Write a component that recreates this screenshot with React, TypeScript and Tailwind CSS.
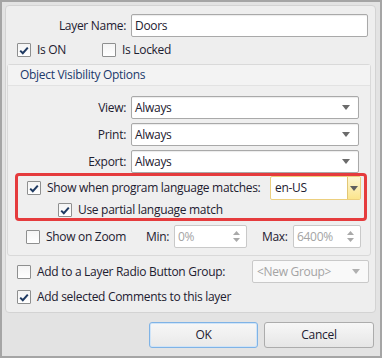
import React from 'react';

const Check = ({ checked }: { checked?: boolean }) => (
  <span className="flex h-[14px] w-[14px] shrink-0 items-center justify-center rounded-[1px] border border-[#8e8f8f] bg-gradient-to-b from-[#f4f4f4] to-white">
    {checked && (
      <svg width="10" height="9" viewBox="0 0 10 9">
        <path d="M1.2 4.6 L3.8 7.2 L8.8 1.6" fill="none" stroke="#1f3a62" strokeWidth="2" />
      </svg>
    )}
  </span>
);

const Arrow = ({ color = '#6b6b6b' }: { color?: string }) => (
  <svg width="8" height="5" viewBox="0 0 8 5">
    <path d="M0 0 H8 L4 5 Z" fill={color} />
  </svg>
);

const Select = ({ value, w }: { value: string; w: string }) => (
  <div className={`flex h-[23px] ${w} items-center rounded-[2px] border border-[#a9a9a9] bg-white pl-[3px] pr-[8px] shadow-[inset_0_1px_1px_rgba(0,0,0,0.08)]`}>
    <span className="flex-1">{value}</span>
    <Arrow />
  </div>
);

const Spin = ({ value, w }: { value: string; w: string }) => (
  <div className={`flex h-[23px] ${w} items-center rounded-[2px] border border-[#c9c9c9] bg-white pl-[3px] pr-[6px]`}>
    <span className="flex-1 text-[#a4a4a4]">{value}</span>
    <div className="flex flex-col gap-[3px]">
      <svg width="7" height="4" viewBox="0 0 7 4"><path d="M0 4 L3.5 0 L7 4 Z" fill="#a9a9a9" /></svg>
      <svg width="7" height="4" viewBox="0 0 7 4"><path d="M0 0 H7 L3.5 4 Z" fill="#a9a9a9" /></svg>
    </div>
  </div>
);

export default function App() {
  return (
    <div
      className="h-[358px] w-[382px] overflow-hidden whitespace-nowrap border-2 border-[#a5a5a5] bg-[#e3e3e3] text-[12px] tracking-[-0.3px] text-[#1d2030]"
      style={{ fontFamily: '"Segoe UI", "Open Sans", sans-serif' }}
    >
      <div className="ml-[3px] mt-[3px] flex h-[308px] w-[371px] flex-col rounded-[4px] border border-[#d3d3d3] bg-[#eeeeee]">
        <div className="mt-[8px] flex items-center">
          <span className="w-[120px] text-right">Layer Name:</span>
          <input
            className="ml-[5px] h-[23px] w-[237px] rounded-[2px] border border-[#a9a9a9] bg-white pl-[3px] outline-none shadow-[inset_0_1px_1px_rgba(0,0,0,0.08)]"
            defaultValue="Doors"
          />
        </div>
        <div className="mt-[6px] flex h-[14px] items-center pl-[11px]">
          <Check checked />
          <span className="ml-[6px] w-[65px]">Is ON</span>
          <Check />
          <span className="ml-[6px]">Is Locked</span>
        </div>

        <div className="ml-[1px] mt-[7px] flex h-[192px] w-[364px] flex-col rounded-[3px] border border-[#d9d9d9] bg-[#efefef]">
          <div className="flex h-[21px] items-center border-b border-[#e2e2e2] bg-[#f3f3f3] pl-[12px] text-[#20396b]">
            Object Visibility Options
          </div>
          <div className="mt-[10px] flex flex-col gap-[4px]">
            {['View:', 'Print:', 'Export:'].map((l) => (
              <div key={l} className="flex items-center">
                <span className="w-[118px] text-right">{l}</span>
                <div className="ml-[5px]">
                  <Select value="Always" w="w-[228px]" />
                </div>
              </div>
            ))}
          </div>

          <div className="ml-[7px] flex h-[48px] w-[352px] flex-col rounded-[4px] border-[3px] border-[#e53b3d]">
            <div className="flex h-[24px] items-center pl-[9px] pr-[3px]">
              <Check checked />
              <span className="ml-[6px]">Show when program language matches:</span>
              <div className="ml-auto flex h-[24px] w-[91px] items-center rounded-[2px] border border-[#eccf7e] bg-white pl-[4px]">
                <span className="flex-1">en-US</span>
                <div className="flex h-full w-[13px] items-center justify-center border-l border-[#e2c775] bg-gradient-to-b from-[#fdf6d2] to-[#fbe58c]">
                  <Arrow color="#5f5f5f" />
                </div>
              </div>
            </div>
            <div className="mt-[3px] flex h-[14px] items-center pl-[40px]">
              <Check checked />
              <span className="ml-[6px]">Use partial language match</span>
            </div>
          </div>

          <div className="mt-[4px] flex items-center pl-[18px]">
            <Check />
            <span className="ml-[6px] w-[100px]">Show on Zoom</span>
            <span className="w-[28px]">Min:</span>
            <Spin value="0%" w="w-[73px]" />
            <span className="ml-[15px] w-[31px]">Max:</span>
            <Spin value="6400%" w="w-[68px]" />
          </div>
        </div>

        <div className="mt-[4px] flex items-center pl-[11px]">
          <Check />
          <span className="ml-[6px] w-[215px]">Add to a Layer Radio Button Group:</span>
          <div className="flex h-[23px] w-[117px] items-center rounded-[2px] border border-[#c9c9c9] bg-[#f9f9f9] pl-[4px] pr-[8px]">
            <span className="flex-1 text-[#a4a4a4]">&lt;New Group&gt;</span>
            <Arrow color="#b0b0b0" />
          </div>
        </div>
        <div className="mt-[7px] flex h-[14px] items-center pl-[11px]">
          <Check checked />
          <span className="ml-[6px]">Add selected Comments to this layer</span>
        </div>
      </div>

      <div className="mt-[9px] flex pl-[147px]">
        <button className="h-[26px] w-[109px] rounded-[3px] border border-[#7fb3e6] bg-gradient-to-b from-[#f7f7f7] to-[#e9e9e9] shadow-[inset_0_0_0_1px_#cfe4f8]">
          OK
        </button>
        <button className="ml-[6px] h-[26px] w-[110px] rounded-[3px] border border-[#acacac] bg-gradient-to-b from-[#f7f7f7] to-[#e6e6e6]">
          Cancel
        </button>
      </div>
    </div>
  );
}
